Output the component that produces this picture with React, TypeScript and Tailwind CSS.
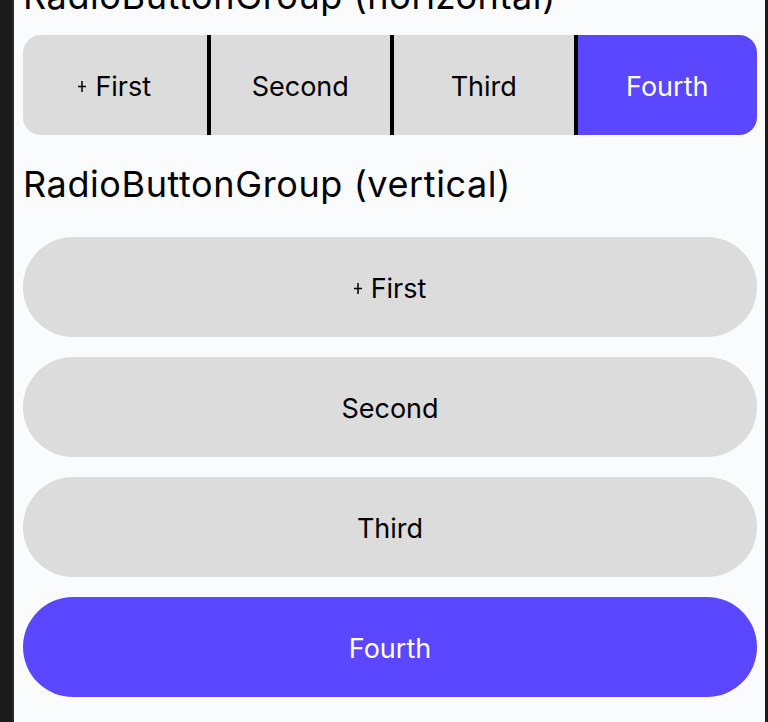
const options = ['First', 'Second', 'Third', 'Fourth'];
const selected = 'Fourth';

const PlusIcon = () => (
  <svg width="8" height="11" viewBox="0 0 8 11" className="mr-[9px] -mt-[1px]" fill="none" stroke="currentColor" strokeWidth="1.5">
    <path d="M4 0v11M0 5.5h8" />
  </svg>
);

const Label = ({ text }: { text: string }) => (
  <span className="flex items-center">
    {text === 'First' && <PlusIcon />}
    {text}
  </span>
);

export default function App() {
  return (
    <div className="flex h-[722px] w-[768px] overflow-hidden bg-[#1b1b1b] font-['Inter',sans-serif] text-black">
      <div className="w-[12px] shrink-0 bg-[#1b1b1b]" />
      <div className="w-[2px] shrink-0 bg-[#2a2a2a]" />
      <div className="flex-1 bg-[#fafbfd] pl-[9px] pr-[8px]">
        <div className="-mt-[26px]">
          <h2 className="text-[36px] leading-[44px] font-normal tracking-[0.6px]">RadioButtonGroup (horizontal)</h2>

          {/* horizontal group */}
          <div className="mt-[17px] flex h-[100px] overflow-hidden rounded-[18px] bg-[#dcdcdc]">
            {options.map((o, i) => (
              <div key={o} className="flex flex-1">
                {i > 0 && <div className="w-[4px] shrink-0 bg-black" />}
                <button
                  className={
                    o === selected
                      ? 'flex flex-1 items-center justify-center bg-[#5a47ff] pt-[4px] text-[27px] text-white'
                      : 'flex flex-1 items-center justify-center pt-[4px] text-[27px] text-black'
                  }
                >
                  <Label text={o} />
                </button>
              </div>
            ))}
          </div>

          <h2 className="mt-[27px] text-[36px] leading-[44px] font-normal tracking-[0.6px]">RadioButtonGroup (vertical)</h2>

          {/* vertical group */}
          <div className="mt-[31px] flex flex-col gap-[20px]">
            {options.map((o) => (
              <button
                key={o}
                className={
                  o === selected
                    ? 'flex h-[100px] items-center justify-center rounded-full bg-[#5a47ff] pt-[4px] text-[27px] text-white'
                    : 'flex h-[100px] items-center justify-center rounded-full bg-[#dcdcdc] pt-[4px] text-[27px] text-black'
                }
              >
                <Label text={o} />
              </button>
            ))}
          </div>
        </div>
      </div>
      <div className="w-[3px] shrink-0 bg-[#1b1b1b]" />
    </div>
  );
}
